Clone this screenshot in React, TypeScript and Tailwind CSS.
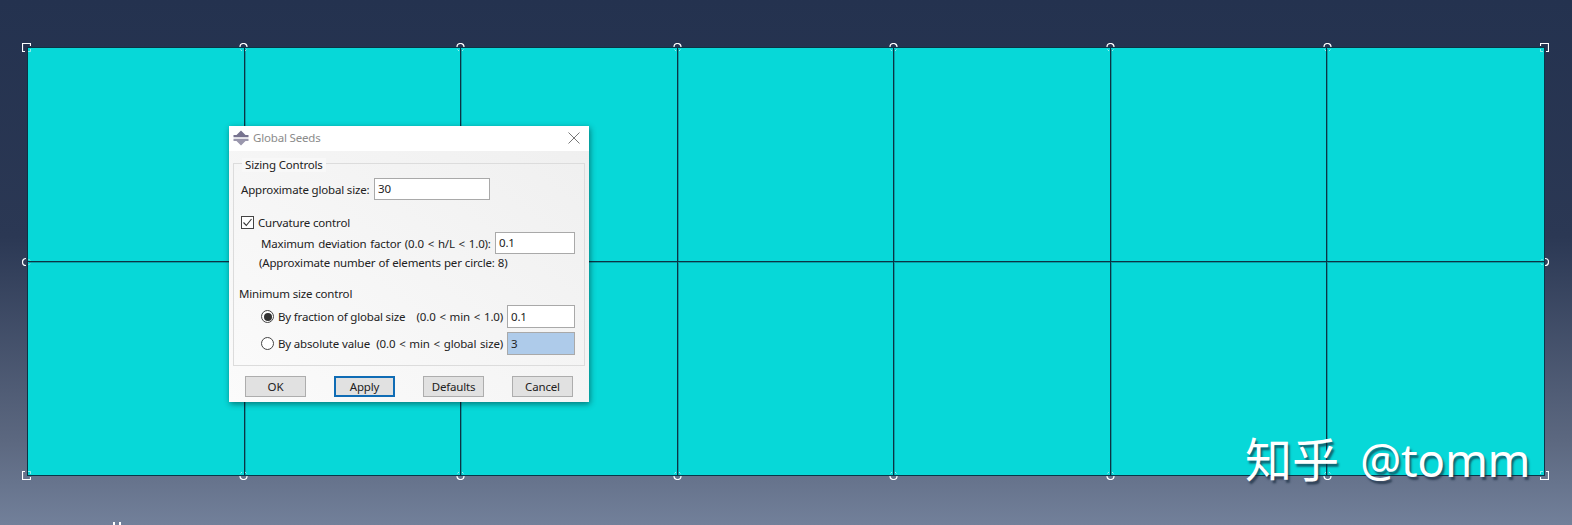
const edgeHandles = [1, 2, 3, 4, 5, 6];
const meshCells = Array.from({ length: 14 });

function CornerHandle({ className = '' }: { className?: string }) {
  return (
    <svg className={`shrink-0 ${className}`} width="9" height="9" viewBox="0 0 9 9" fill="none">
      <path d="M8.5 3V0.5H0.5V8.5H3" stroke="#ffffff" strokeWidth="1.2" />
      <path d="M6 8.5H8.5V6" stroke="#ffffff" strokeOpacity="0.55" />
    </svg>
  );
}

function EdgeHandle({ className = '' }: { className?: string }) {
  return (
    <svg className={`shrink-0 ${className}`} width="9" height="9" viewBox="0 0 9 9" fill="none">
      <path d="M1 4A3.5 3.5 0 0 1 8 4" stroke="#ffffff" strokeWidth="1.2" />
      <path d="M1.5 6.5L3 8M7.5 6.5L6 8" stroke="#ffffff" strokeOpacity="0.6" />
    </svg>
  );
}

function MeshCell() {
  return <div className="border-r border-b border-[#0b3444] shadow-[1px_1px_0_rgba(10,60,80,0.35)] [&:nth-child(7n)]:border-r-0 [&:nth-child(n+8)]:border-b-0" />;
}

function TextBox({ value, className, fill }: { value: string; className: string; fill?: boolean }) {
  return (
    <div className={`flex shrink-0 items-center border border-[#a9a9a9] pl-[3px] text-[#222] ${fill ? 'bg-[#aecbea]' : 'bg-white'} ${className}`}>
      {value}
    </div>
  );
}

function Radio({ checked }: { checked?: boolean }) {
  return (
    <span className="mr-[4px] flex h-[13px] w-[13px] shrink-0 items-center justify-center rounded-full border border-[#444] bg-white">
      {checked && <span className="h-[8px] w-[8px] rounded-full bg-[#333]" />}
    </span>
  );
}

function DialogButton({ label, active }: { label: string; active?: boolean }) {
  return (
    <button className={`flex h-[21px] w-[61px] items-center justify-center bg-[#e1e1e1] ${active ? 'border-2 border-[#0f6cb5]' : 'border border-[#adadad]'}`}>
      {label}
    </button>
  );
}

function GlobalSeedsDialog() {
  return (
    <div className="absolute left-[229px] top-[126px] h-[276px] w-[360px] bg-gradient-to-tr from-[#fbfbfb] to-[#efefef] font-['Noto_Sans','Liberation_Sans',sans-serif] text-[11.5px] leading-[18px] tracking-[-0.17px] text-[#222] shadow-[1px_2px_6px_rgba(0,0,0,0.45)]">
      <div className="flex h-[25px] items-center bg-white pb-[2px] pl-[4px] pr-[9px]">
        <svg width="16" height="16" viewBox="0 0 16 16" className="mr-[4px]">
          <path d="M8 0.5L12.5 5H15.5V7.2H0.5V5H3.5Z" fill="#77738f" />
          <path d="M8 15.5L12.5 11H15.5V8.8H0.5V11H3.5Z" fill="#9a97ad" />
        </svg>
        <span className="flex-1 text-[#8b8b8b]">Global Seeds</span>
        <svg width="12" height="12" viewBox="0 0 12 12" stroke="#777" fill="none">
          <path d="M0.5 0.5L11.5 11.5M11.5 0.5L0.5 11.5" />
        </svg>
      </div>

      <div className="relative ml-[4px] mt-[12px] h-[203px] w-[352px] border border-[#dcdcdc] pr-[9px] pt-[14px]">
        <span className="absolute left-[8px] top-[-6px] bg-[#f8f8f8] px-[3px] leading-[14px]">Sizing Controls</span>

        <div className="flex h-[22px] items-center pl-[7px]">
          <span className="mr-[4px] w-[129px] whitespace-nowrap pt-[1px]">Approximate global size:</span>
          <TextBox value="30" className="h-[22px] w-[116px]" />
        </div>

        <div className="mt-[13px] flex h-[19px] items-center pl-[7px]">
          <span className="mr-[4px] flex h-[13px] w-[13px] items-center justify-center border border-[#444] bg-white">
            <svg width="11" height="11" viewBox="0 0 11 11" fill="none" stroke="#333" strokeWidth="1.1">
              <path d="M1.5 5.5L4.3 8.5L9.5 2" />
            </svg>
          </span>
          Curvature control
        </div>

        <div className="flex h-[22px] items-center justify-between pl-[27px]">
          <span className="whitespace-nowrap pt-[1px] [word-spacing:1px]">Maximum deviation factor (0.0 &lt; h/L &lt; 1.0):</span>
          <TextBox value="0.1" className="h-[22px] w-[80px]" />
        </div>

        <div className="pl-[25px] [word-spacing:0.3px]">(Approximate number of elements per circle: 8)</div>

        <div className="mt-[13px] pl-[5px]">Minimum size control</div>

        <div className="mt-[2px] flex h-[23px] items-center pl-[27px]">
          <Radio checked />
          <span className="flex-1 whitespace-nowrap">By fraction of global size</span>
          <span className="mr-[4px] whitespace-nowrap [word-spacing:1px]">(0.0 &lt; min &lt; 1.0)</span>
          <TextBox value="0.1" className="h-[23px] w-[68px]" />
        </div>

        <div className="mt-[4px] flex h-[23px] items-center pl-[27px]">
          <Radio />
          <span className="flex-1 whitespace-nowrap">By absolute value</span>
          <span className="mr-[4px] whitespace-nowrap [word-spacing:1px]">(0.0 &lt; min &lt; global size)</span>
          <TextBox value="3" className="h-[23px] w-[68px]" fill />
        </div>
      </div>

      <div className="mt-[10px] flex justify-between px-[16px]">
        <DialogButton label="OK" />
        <DialogButton label="Apply" active />
        <DialogButton label="Defaults" />
        <DialogButton label="Cancel" />
      </div>
    </div>
  );
}

export default function App() {
  return (
    <div className="relative h-[525px] w-[1572px] overflow-hidden bg-[linear-gradient(180deg,#24324f_0%,#2b3854_45%,#5c6880_84%,#72809a_100%)] pl-[27px] pr-[27px] pt-[47px]">
      <div className="relative h-[429px] w-[1518px] border border-[#0b3444] bg-[#07d8d8]">
        <div className="grid h-full grid-cols-7 grid-rows-2">
          {meshCells.map((_, i) => (
            <MeshCell key={i} />
          ))}
        </div>

        {/* selection handles around the part */}
        <div className="absolute -left-[6px] -right-[5px] -top-[5px] flex justify-between">
          <CornerHandle />
          {edgeHandles.map((n) => (
            <EdgeHandle key={n} />
          ))}
          <CornerHandle className="rotate-90" />
        </div>
        <div className="absolute -left-[6px] -right-[5px] top-1/2 flex -translate-y-1/2 justify-between">
          <EdgeHandle className="-rotate-90" />
          <EdgeHandle className="rotate-90" />
        </div>
        <div className="absolute -bottom-[5px] -left-[6px] -right-[5px] flex justify-between">
          <CornerHandle className="-rotate-90" />
          {edgeHandles.map((n) => (
            <EdgeHandle key={n} className="rotate-180" />
          ))}
          <CornerHandle className="rotate-180" />
        </div>
      </div>

      <div className="absolute left-[113px] top-[522px] h-[3px] w-[8px] border-x-2 border-white" />

      <GlobalSeedsDialog />

      <div className="absolute left-[1245px] top-[427px] flex gap-[21px] whitespace-nowrap font-['Noto_Sans','Noto_Sans_CJK_SC',sans-serif] text-[47px] leading-[64px] text-white [text-shadow:2px_3px_2px_rgba(20,40,60,0.65)]">
        <span>知乎</span>
        <span className="text-[46px] tracking-[-0.3px]">@tomm</span>
      </div>
    </div>
  );
}
